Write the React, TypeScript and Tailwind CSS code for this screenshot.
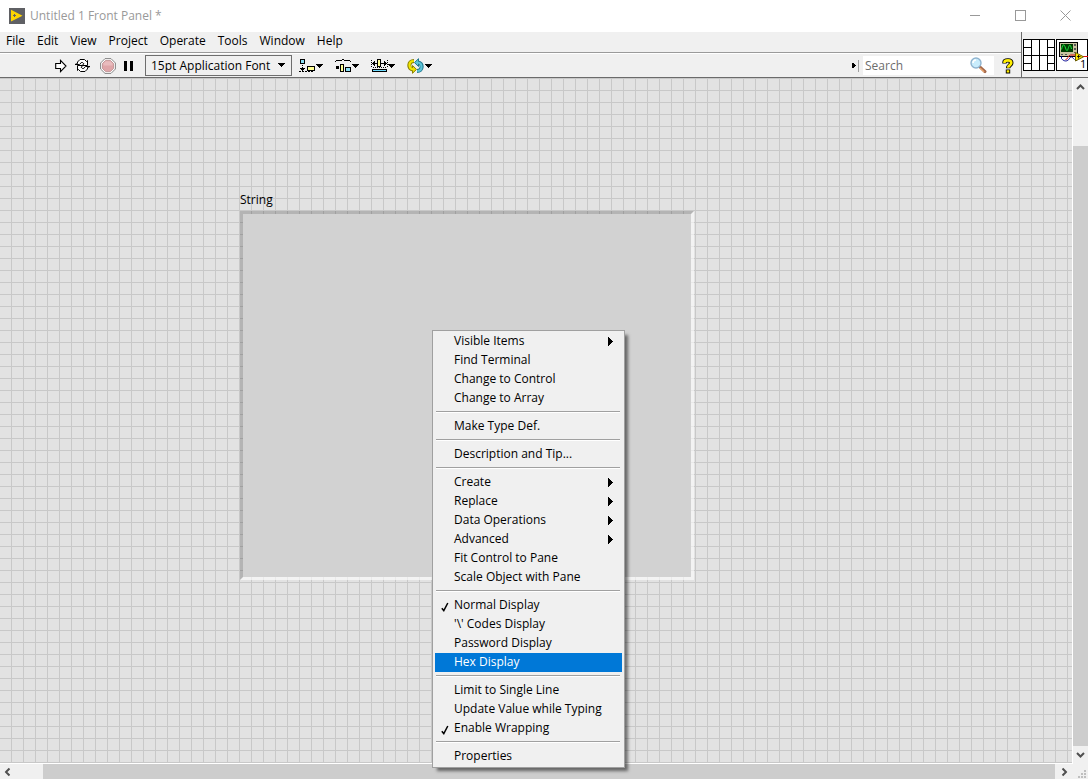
import { useState } from "react";

type Entry = { label: string; sub?: boolean };

const MENUS = ["File", "Edit", "View", "Project", "Operate", "Tools", "Window", "Help"];

const GROUPS: Entry[][] = [
  [
    { label: "Visible Items", sub: true },
    { label: "Find Terminal" },
    { label: "Change to Control" },
    { label: "Change to Array" },
  ],
  [{ label: "Make Type Def." }],
  [{ label: "Description and Tip..." }],
  [
    { label: "Create", sub: true },
    { label: "Replace", sub: true },
    { label: "Data Operations", sub: true },
    { label: "Advanced", sub: true },
    { label: "Fit Control to Pane" },
    { label: "Scale Object with Pane" },
  ],
  [
    { label: "Normal Display" },
    { label: "'\\' Codes Display" },
    { label: "Password Display" },
    { label: "Hex Display" },
  ],
  [
    { label: "Limit to Single Line" },
    { label: "Update Value while Typing" },
    { label: "Enable Wrapping" },
  ],
  [{ label: "Properties" }],
];

const CHECKED = ["Normal Display", "Enable Wrapping"];

function Caret() {
  return (
    <svg width="7" height="4" viewBox="0 0 7 4" shapeRendering="crispEdges" className="shrink-0">
      <path d="M0 0h7v1H0zM1 1h5v1H1zM2 2h3v1H2zM3 3h1v1H3z" />
    </svg>
  );
}

function AppIcon() {
  return (
    <svg width="16" height="16" viewBox="0 0 16 16" className="shrink-0">
      <rect width="16" height="16" fill="#5f6064" />
      <path d="M2 1.8 13.5 7.8 2 13.6Z" fill="#ffd500" />
      <path d="M4 7.5h3M5.5 6v3" stroke="#5f6064" />
    </svg>
  );
}

function RunIcon() {
  return (
    <svg width="12" height="14" viewBox="0 0 12 14">
      <path d="M.7 4.5h4.8V1.4L11 7l-5.5 5.6V9.5H.7z" fill="#fff" stroke="#000" strokeWidth="1.1" />
    </svg>
  );
}

function RunLoopIcon() {
  return (
    <svg width="17" height="15" viewBox="0 0 17 15" fill="#fff" stroke="#000">
      <path d="M3.5 5.5V4L6 1.5h4.5l2 2 1-1v5H8.2l1.6-1.7-1.2-1.3H7.3L5.5 6.5H1z" />
      <path d="M13.5 9.5V11L11 13.5H6.5l-2-2-1 1v-5h5.3L7.2 9.2l1.2 1.3h1.3l1.8-2H16z" />
    </svg>
  );
}

function AbortIcon() {
  return (
    <svg width="16" height="16" viewBox="0 0 16 16">
      <path d="M5 .6h6L15.4 5v6L11 15.4H5L.6 11V5z" fill="#fff" stroke="#848484" />
      <path d="M5.6 2.4h4.8l3.2 3.2v4.8l-3.2 3.2H5.6l-3.2-3.2V5.6z" fill="#dfa5a8" stroke="#b88a8c" strokeWidth=".8" />
      <path d="M5.8 3.2h4.4l2.4 2.4v1.8H3.4V5.6z" fill="#e9bbbd" />
    </svg>
  );
}

function AlignIcon() {
  return (
    <svg width="17" height="14" viewBox="0 0 17 14" shapeRendering="crispEdges">
      <rect x="1.5" y=".5" width="4" height="4" fill="#8be0f5" stroke="#000" />
      <rect x="8.5" y="7.5" width="7" height="4" fill="#ffff94" stroke="#000" />
      <path d="M3 6h1v1H3zM3 8h1v2H3zM1 9h5v1H1zM2 10h3v1H2zM3 11h1v1H3zM0 12h2v1H0zM3 12h2v1H3zM6 12h2v1H6zM9 12h2v1H9zM12 12h2v1h-2z" />
    </svg>
  );
}

function DistributeIcon() {
  return (
    <svg width="17" height="14" viewBox="0 0 17 14" shapeRendering="crispEdges">
      <path d="M0 2h1v1H0zM1 1h6v1H1zM7 0h2v1H7zM9 1h6v1H9zM15 2h1v1h-1zM1 7h3v3H1z" />
      <rect x="5.5" y="5.5" width="3" height="7" fill="#ffff94" stroke="#000" />
      <rect x="10.5" y="8.5" width="5" height="4" fill="#8be0f5" stroke="#000" />
    </svg>
  );
}

function ResizeIcon() {
  return (
    <svg width="17" height="14" viewBox="0 0 17 14" shapeRendering="crispEdges">
      <rect x="6.5" y=".5" width="3" height="7" fill="#ffff94" stroke="#000" />
      <rect x="1.5" y="10.5" width="14" height="2" fill="#6edcff" stroke="#000" />
      <path d="M0 1h1v1H0zM0 3h1v1H0zM0 5h1v1H0zM0 7h1v1H0zM16 1h1v1h-1zM16 3h1v1h-1zM16 5h1v1h-1zM16 7h1v1h-1zM1 4h5v1H1zM2 3h2v3H2zM3 2h1v5H3zM10 4h6v1h-6zM13 3h2v3h-2zM13 2h1v5h-1zM2 8h1v1H2zM4 8h1v1H4zM6 8h1v1H6zM8 8h1v1H8zM10 8h1v1h-1zM12 8h1v1h-1zM14 8h1v1h-1z" />
    </svg>
  );
}

function ReorderIcon() {
  return (
    <svg width="17" height="16" viewBox="0 0 17 16" fill="none">
      <path d="M7 3C1 3 .8 11 6 11.5" stroke="#8a8200" strokeWidth="4" />
      <path d="M5.5 7.5v7.8l4-3.9z" fill="#e8dc00" stroke="#8a8200" />
      <path d="M6.8 3C1 3 1.2 11 6.5 11.5" stroke="#f2e600" strokeWidth="2.2" />
      <path d="M10 13c6 0 6.2-8 1-8.5" stroke="#21778e" strokeWidth="4" />
      <path d="M11.5 8.5V.7l-4 3.9z" fill="#5cc4d8" stroke="#21778e" />
      <path d="M10.2 13c5.8 0 5.6-8 .3-8.5" stroke="#5cc4d8" strokeWidth="2.2" />
    </svg>
  );
}

function MagnifierIcon() {
  return (
    <svg width="17" height="17" viewBox="0 0 17 17">
      <path d="m10 10 5 4.6" stroke="#a3674a" strokeWidth="3" strokeLinecap="round" />
      <path d="m10 11 4.2 4" stroke="#e8a56c" strokeWidth="1.2" />
      <circle cx="6" cy="6" r="5" fill="#c8ecfc" stroke="#8fb3cf" strokeWidth="1.4" />
      <path d="M3 6a3 3 0 0 1 3-3" stroke="#fff" strokeWidth="1.6" fill="none" />
    </svg>
  );
}

function HelpIcon() {
  return (
    <svg width="12" height="16" viewBox="0 0 12 16" fill="none">
      <path d="M2.5 5.6V4.4C2.5 3 4 2.4 6 2.4s3.3 1 3.3 2.6c0 2-3.2 2.3-3.2 5.2M6 11.6v4" stroke="#000" strokeWidth="4.4" />
      <path d="M2.5 5V4.4C2.5 3 4 2.4 6 2.4s3.3 1 3.3 2.6c0 2-3.2 2.3-3.2 4.8M6 12.2v2.4" stroke="#ffee00" strokeWidth="2.6" />
    </svg>
  );
}

function ConnectorPane() {
  return (
    <svg width="32" height="32" viewBox="0 0 32 32" shapeRendering="crispEdges">
      <rect x=".5" y=".5" width="31" height="31" fill="#fff" stroke="#000" />
      <path d="M8.5 0v32M16.5 0v32M24.5 0v32M0 16.5h32M0 8.5h8M24 8.5h8M0 24.5h8M24 24.5h8" stroke="#000" />
    </svg>
  );
}

function ViIcon() {
  return (
    <svg width="32" height="32" viewBox="0 0 32 32">
      <rect x=".5" y=".5" width="31" height="31" fill="#fff" stroke="#000" shapeRendering="crispEdges" />
      <g shapeRendering="crispEdges">
        <rect x="3.5" y="3.5" width="18" height="14" fill="#c9c2a0" stroke="#000" />
        <rect x="5" y="5" width="12" height="8" fill="#003c00" />
        <path d="M18 5h2v2h-2zM18 9h2v2h-2zM18 13h2v1h-2zM5 15h2v1H5zM9 15h2v1H9z" fill="#555" />
      </g>
      <path d="M5.5 10.5C7 4 8.2 5 9.5 9s2 3 3-.5 2-3 3 1.5" stroke="#20e840" fill="none" />
      <path d="M5.5 17v2.5c2 3 6 3.5 8 0s3-.5 5 1" stroke="#000090" fill="none" />
      <path d="M9.5 20.5c3 0 2-4 5-4.5H20M27 17.5h5" stroke="#e01010" fill="none" />
      <path d="M19.5 13.5v8.5l8-4.2z" fill="#ffe800" stroke="#6b5c00" />
      <path d="M21 17.5h3.5M22.5 16v3.5" stroke="#000" strokeWidth=".8" />
      <text x="24" y="29" fontSize="11" fontFamily="Open Sans, sans-serif">1</text>
    </svg>
  );
}

function ScrollArrow({ turn }: { turn: string }) {
  return (
    <svg width="9" height="6" viewBox="0 0 9 6" className={turn}>
      <path d="M1 5l3.5-3.5L8 5" fill="none" stroke="#505050" strokeWidth="2" />
    </svg>
  );
}

function TitleBar() {
  return (
    <header className="flex h-8 shrink-0 items-center bg-white pb-px pl-[9px]">
      <AppIcon />
      <h1 className="ml-[5px] flex-1 text-[#999]">Untitled 1 Front Panel *</h1>
      <button aria-label="Minimize" className="flex h-full w-[45px] items-center justify-center">
        <svg width="11" height="11" viewBox="0 0 11 11" stroke="#999" shapeRendering="crispEdges"><path d="M0 5.5h10" /></svg>
      </button>
      <button aria-label="Maximize" className="flex h-full w-[45px] items-center justify-center">
        <svg width="11" height="11" viewBox="0 0 11 11" stroke="#999" fill="none" shapeRendering="crispEdges"><rect x=".5" y=".5" width="10" height="10" /></svg>
      </button>
      <button aria-label="Close" className="flex h-full w-[45px] items-center justify-center">
        <svg width="11" height="11" viewBox="0 0 11 11" stroke="#999"><path d="M.5.5l10 10M10.5.5l-10 10" /></svg>
      </button>
    </header>
  );
}

function Toolbar() {
  return (
    <div className="flex h-6 items-center border-t border-white">
      <button aria-label="Run" className="ml-[55px]"><RunIcon /></button>
      <button aria-label="Run Continuously" className="ml-[7px]"><RunLoopIcon /></button>
      <button aria-label="Abort" className="ml-[9px]"><AbortIcon /></button>
      <button aria-label="Pause" className="ml-2 flex gap-[3px]">
        <span className="h-[10px] w-[3px] bg-black" />
        <span className="h-[10px] w-[3px] bg-black" />
      </button>
      <div className="relative ml-3">
        <select aria-label="Text settings" className="block h-[21px] w-[147px] appearance-none border border-[#6e6e6e] bg-[#f0f0f0] pl-[5px] text-[12px] leading-[18px]">
          <option>15pt Application Font</option>
        </select>
        <span className="pointer-events-none absolute top-2 right-[7px]"><Caret /></span>
      </div>
      <button aria-label="Align Objects" className="ml-[7px] flex items-center"><AlignIcon /><Caret /></button>
      <button aria-label="Distribute Objects" className="ml-3 flex items-center"><DistributeIcon /><Caret /></button>
      <button aria-label="Resize Objects" className="ml-3 flex items-center"><ResizeIcon /><Caret /></button>
      <button aria-label="Reorder" className="ml-3 flex items-center gap-[1px]"><ReorderIcon /><Caret /></button>

      <button aria-label="Collapse search" className="ml-auto flex items-center gap-[2px]">
        <svg width="4" height="5" viewBox="0 0 4 5" shapeRendering="crispEdges"><path d="M0 0h2v1h1v1h1v1H3v1H2v1H0z" /></svg>
        <span className="h-3 w-px bg-[#a0a0a0]" />
      </button>
      <label className="ml-1 flex h-[19px] w-[131px] items-center bg-white pr-[7px] pl-[2px]">
        <input aria-label="Search" placeholder="Search" className="min-w-0 flex-1 text-[12px] outline-none placeholder:text-[#6d6d6d]" />
        <MagnifierIcon />
      </label>
      <button aria-label="Context Help" className="mr-[7px] ml-2"><HelpIcon /></button>
    </div>
  );
}

function ContextMenu() {
  const [active, setActive] = useState("Hex Display");
  return (
    <div role="menu" className="absolute top-[330px] left-[432px] w-[193px] border border-[#a0a0a0] bg-[#f0f0f0] px-[2px] py-px shadow-[4px_4px_3px_-1px_rgba(0,0,0,0.5)]">
      {GROUPS.map((group, i) => (
        <div key={i}>
          {i > 0 && <div role="separator" className="mt-[3px] mr-[2px] mb-1 ml-px h-[2px] border-t border-b border-t-[#a0a0a0] border-b-white" />}
          {group.map(item => (
            <button
              key={item.label}
              role="menuitem"
              onMouseEnter={() => setActive(item.label)}
              className={`flex h-[19px] w-full items-center pr-[9px] text-left ${
                active === item.label ? "bg-[#0078d7] text-white" : "text-black"
              }`}
            >
              <span className="flex w-[19px] justify-center">
                {CHECKED.includes(item.label) && (
                  <svg width="8" height="10" viewBox="0 0 8 10" className="mt-[2px]">
                    <path d="M.8 6.2 2.8 8.6 6.8 1" fill="none" stroke="currentColor" strokeWidth="1.5" />
                  </svg>
                )}
              </span>
              <span className="flex-1 pb-[2px] whitespace-nowrap">{item.label}</span>
              {item.sub && (
                <svg width="5" height="9" viewBox="0 0 5 9" shapeRendering="crispEdges">
                  <path d="M0 0h1v1h1v1h1v1h1v1h1v1H4v1H3v1H2v1H1v1H0z" fill="currentColor" />
                </svg>
              )}
            </button>
          ))}
        </div>
      ))}
    </div>
  );
}

export default function App() {
  return (
    <div className="relative flex h-screen min-h-[770px] flex-col overflow-hidden bg-[#f0f0f0] font-['Open_Sans',sans-serif] text-[12px] leading-4 text-black">
      <TitleBar />

      <div className="flex shrink-0 border-b border-[#6b6b6b]">
        <div className="min-w-0 flex-1">
          <nav className="flex h-[21px] items-center gap-3 border-b border-[#9a9a9a] pb-[2px] pl-[6px]">
            {MENUS.map(m => <button key={m}>{m}</button>)}
          </nav>
          <Toolbar />
        </div>
        <div className="flex items-center border-l border-[#6b6b6b] pl-px">
          <ConnectorPane />
          <span className="ml-px"><ViIcon /></span>
        </div>
      </div>

      <div className="flex min-h-0 flex-1">
        {/* Panel with alignment grid */}
        <main className="min-w-0 flex-1 overflow-hidden border-r border-b border-white bg-[#e2e2e2] bg-[linear-gradient(to_right,#c8c8c8_1px,transparent_1px),linear-gradient(to_bottom,#c8c8c8_1px,transparent_1px)] bg-[size:12px_12px] bg-[position:11px_0px] pt-[114px] pl-[240px]">
          <label htmlFor="string" className="block h-[19px]">String</label>
          <textarea
            id="string"
            readOnly
            className="block h-[369px] w-[454px] resize-none border-[3px] border-t-black/20 border-r-white/60 border-b-white/60 border-l-black/20 bg-[#d2d2d2] bg-clip-padding outline-none"
          />
        </main>
        {/* Vertical scrollbar */}
        <div className="flex w-[15px] flex-col items-center">
          <button aria-label="Scroll up" className="flex h-[17px] items-center"><ScrollArrow turn="" /></button>
          <div className="mt-[51px] w-full flex-1 bg-[#cdcdcd]" />
          <button aria-label="Scroll down" className="flex h-[18px] items-center"><ScrollArrow turn="rotate-180" /></button>
        </div>
      </div>

      {/* Horizontal scrollbar */}
      <div className="flex h-[15px] shrink-0 items-center">
        <button aria-label="Scroll left" className="flex w-[15px] justify-center"><ScrollArrow turn="-rotate-90" /></button>
        <div className="ml-7 h-full flex-1 bg-[#cdcdcd]" />
        <button aria-label="Scroll right" className="flex w-[18px] justify-center"><ScrollArrow turn="rotate-90" /></button>
        <svg width="15" height="15" viewBox="0 0 15 15" fill="#bfbfbf" shapeRendering="crispEdges">
          <path d="M11 6h2v2h-2zM8 9h2v2H8zM11 9h2v2h-2zM5 12h2v2H5zM8 12h2v2H8zM11 12h2v2h-2z" />
        </svg>
      </div>

      <ContextMenu />
    </div>
  );
}
